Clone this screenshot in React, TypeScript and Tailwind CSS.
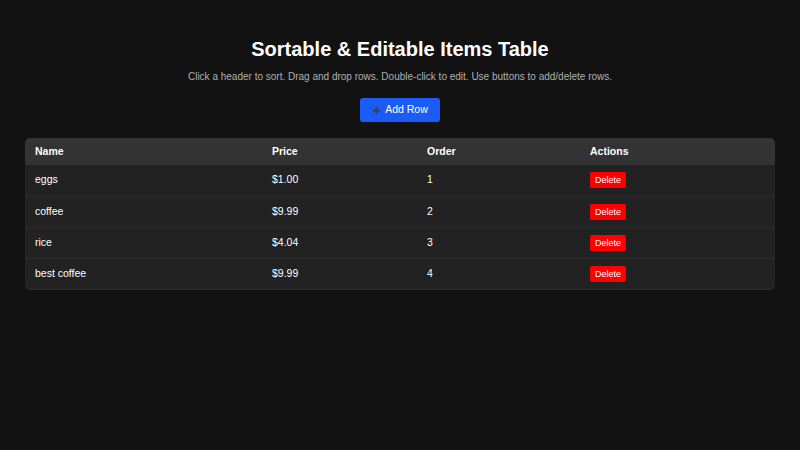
const items = [
  { name: 'eggs', price: '$1.00', order: 1 },
  { name: 'coffee', price: '$9.99', order: 2 },
  { name: 'rice', price: '$4.04', order: 3 },
  { name: 'best coffee', price: '$9.99', order: 4 },
]

export default function App() {
  return (
    <div className="min-h-screen w-full bg-[#121212] px-[25px] pt-[37px] text-white" style={{ fontFamily: '"Liberation Sans", Arial, sans-serif' }}>
      {/* Header */}
      <h1 className="text-center text-[20px] font-bold leading-[24px]">Sortable &amp; Editable Items Table</h1>
      <p className="mt-[10px] text-center text-[10px] leading-[12px] text-[#b0b0b0]">
        Click a header to sort. Drag and drop rows. Double-click to edit. Use buttons to add/delete rows.
      </p>

      <div className="mt-[15px] flex justify-center">
        <button className="flex h-[24px] w-[80px] items-center justify-center gap-[4px] rounded-[3px] bg-[#1a5cf5] text-[10.5px] text-white">
          <svg width="9" height="9" viewBox="0 0 10 10">
            <path d="M5 1v8M1 5h8" stroke="#3a3f4a" strokeWidth="2" />
          </svg>
          Add Row
        </button>
      </div>

      {/* Table */}
      <div className="mt-[16px] overflow-hidden rounded-[5px] bg-[#222222]">
        <table className="w-full border-collapse text-left text-[10.5px]">
          <thead>
            <tr className="h-[27px] bg-[#333333]">
              <th className="w-[237px] px-[10px] font-bold">Name</th>
              <th className="w-[155px] px-[10px] font-bold">Price</th>
              <th className="w-[163px] px-[10px] font-bold">Order</th>
              <th className="px-[10px] font-bold">Actions</th>
            </tr>
          </thead>
          <tbody>
            {items.map((it) => (
              <tr key={it.name} className="h-[31px] border-b border-[#2c2c2c]">
                <td className="px-[10px]">{it.name}</td>
                <td className="px-[10px]">{it.price}</td>
                <td className="px-[10px]">{it.order}</td>
                <td className="px-[10px]">
                  <button className="block h-[16px] rounded-[2px] bg-[#ff0000] px-[5px] text-[9px] leading-[16px] text-white">Delete</button>
                </td>
              </tr>
            ))}
          </tbody>
        </table>
      </div>
    </div>
  )
}
